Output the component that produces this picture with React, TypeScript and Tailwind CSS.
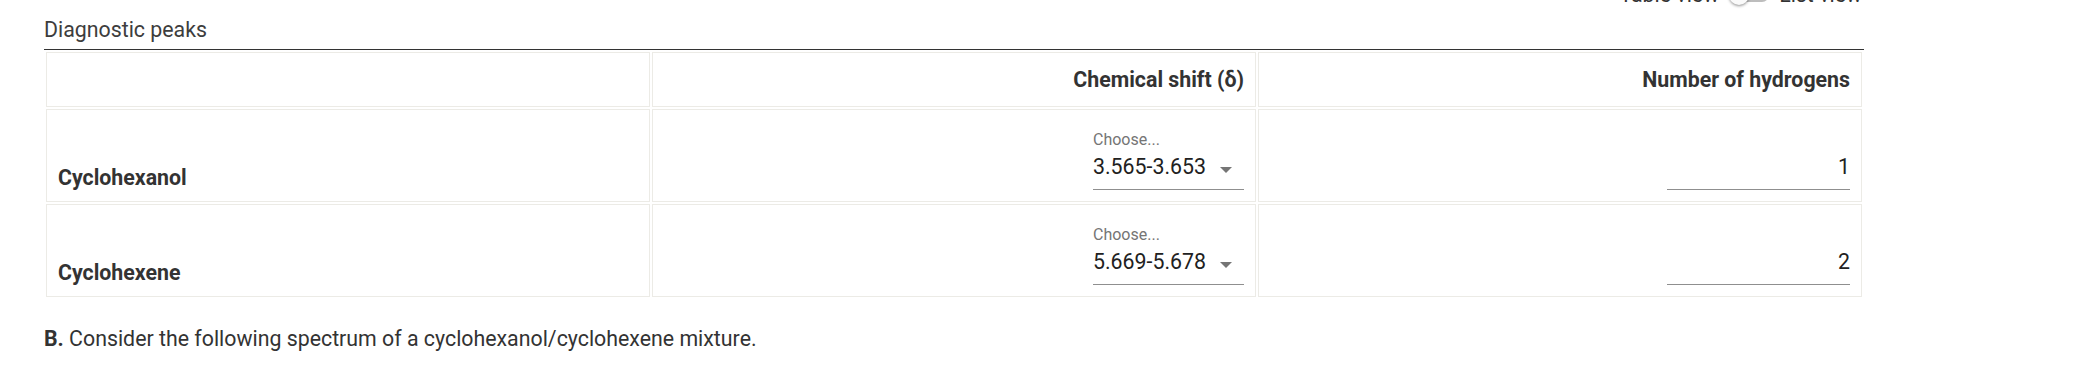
import { useState } from 'react';

const rows = [
  { name: 'Cyclohexanol', shift: '3.565-3.653', count: '1' },
  { name: 'Cyclohexene', shift: '5.669-5.678', count: '2' },
];

function ShiftSelect({ value }: { value: string }) {
  return (
    <div className="ml-auto w-[151px] text-left">
      <div className="text-[16px] leading-[19px] text-[#757575]">Choose...</div>
      <div className="mt-[5px] flex items-center justify-between border-b border-[#8f8f8f] pb-[10px]">
        <span className="text-[21.33px] leading-[25px] text-[#212121]">{value}</span>
        <svg width="12" height="6" viewBox="0 0 12 6" className="mr-[12px] mt-[6px]">
          <path d="M0 0 L12 0 L6 6 Z" fill="#757575" />
        </svg>
      </div>
    </div>
  );
}

export default function App() {
  const [listView, setListView] = useState(false);

  return (
    <div className="min-h-screen bg-white font-['Roboto',sans-serif] text-[#333333]">
      <div className="ml-[44px] w-[1820px]">
        {/* view toggle, mostly scrolled out of view */}
        <div className="-mt-[17px] flex h-[24px] items-center justify-end gap-[10px] pr-[2px] text-[21.33px] leading-[24px]">
          <span>Table view</span>
          <button
            type="button"
            onClick={() => setListView(!listView)}
            className="relative flex h-[24px] w-[40px] items-center"
          >
            <span className="absolute left-[4px] right-0 h-[14px] rounded-full bg-[#bdbdbd]" />
            <span className="relative h-[20px] w-[20px] rounded-full bg-[#fafafa] shadow-[0_1px_3px_rgba(0,0,0,0.45)]" />
          </button>
          <span>List view</span>
        </div>

        <div className="mt-[9px] border-b border-[#333333] pb-[5px] text-[21.33px] leading-[28px] text-[#3d3d3d]">
          Diagnostic peaks
        </div>

        <table className="w-full table-fixed border-separate border-spacing-[2px]">
          <thead>
            <tr className="h-[55px]">
              <th className="border border-[#ecebe6]" />
              <th className="border border-[#ecebe6] px-[11px] text-right align-middle text-[21.33px] font-bold">
                Chemical shift (δ)
              </th>
              <th className="border border-[#ecebe6] px-[11px] text-right align-middle text-[21.33px] font-bold">
                Number of hydrogens
              </th>
            </tr>
          </thead>
          <tbody>
            {rows.map((r) => (
              <tr key={r.name} className="h-[93px]">
                <td className="border border-[#ecebe6] px-[11px] pb-[11px] align-bottom text-[21.33px] font-bold leading-[25px]">
                  {r.name}
                </td>
                <td className="border border-[#ecebe6] px-[11px] pb-[11px] align-bottom">
                  <ShiftSelect value={r.shift} />
                </td>
                <td className="border border-[#ecebe6] px-[11px] pb-[11px] align-bottom">
                  <div className="ml-auto w-[183px] border-b border-[#8f8f8f] pb-[10px] text-right text-[21.33px] leading-[25px] text-[#212121]">
                    {r.count}
                  </div>
                </td>
              </tr>
            ))}
          </tbody>
        </table>

        <p className="mt-[26px] text-[21.33px] leading-[28px] text-[#333333]">
          <span className="font-bold">B.</span> Consider the following spectrum of a cyclohexanol/cyclohexene mixture.
        </p>
      </div>
    </div>
  );
}
